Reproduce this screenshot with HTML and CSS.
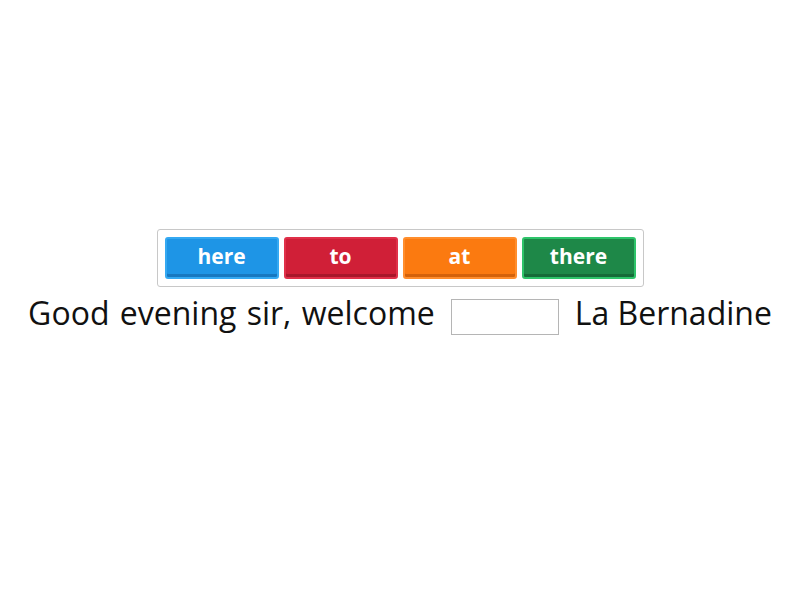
FILE: index.html
```html
<!DOCTYPE html>
<html>
<head>
<meta charset="utf-8">
<link rel="stylesheet" href="styles.css">
</head>
<body>
<div class="page">
  <div class="bank">
    <div class="tile tile-blue">here</div>
    <div class="tile tile-red">to</div>
    <div class="tile tile-orange">at</div>
    <div class="tile tile-green">there</div>
  </div>
  <div class="sentence">
    <span class="words lead">Good evening sir, welcome</span>
    <span class="blank"></span>
    <span class="words">La Bernadine</span>
  </div>
</div>
</body>
</html>
```

FILE: styles.css
```css
html, body {
  margin: 0;
  padding: 0;
  background: #fff;
  font-family: "Open Sans", sans-serif;
}
.page {
  width: 800px;
  height: 600px;
  display: flex;
  flex-direction: column;
  align-items: center;
  padding-top: 229px;
  box-sizing: border-box;
}
.bank {
  display: flex;
  gap: 5px;
  padding: 7px;
  border: 1px solid #c8c8c8;
  border-radius: 3px;
}
.tile {
  width: 114px;
  height: 42px;
  box-sizing: border-box;
  border-radius: 3px;
  display: flex;
  align-items: center;
  justify-content: center;
  color: #fff;
  font-weight: 700;
  font-size: 21px;
  padding-bottom: 4px;
}
.tile-blue {
  background: #1e95e6;
  border: 2px solid #35a9f2;
  box-shadow: inset 0 -3px 0 #1778c0;
}
.tile-red {
  background: #d01f37;
  border: 2px solid #e03049;
  box-shadow: inset 0 -3px 0 #a8172b;
}
.tile-orange {
  background: #fb7a10;
  border: 2px solid #ff8e2d;
  box-shadow: inset 0 -3px 0 #d4620a;
}
.tile-green {
  background: #1e8848;
  border: 2px solid #2ec46a;
  box-shadow: inset 0 -3px 0 #166b38;
}
.sentence {
  display: flex;
  align-items: center;
  gap: 16px;
  margin-top: 6px;
  font-size: 32px;
  color: #111;
  line-height: 40px;
}
.words {
  padding-bottom: 7px;
}
.lead {
  word-spacing: 2px;
}
.blank {
  width: 108px;
  height: 36px;
  box-sizing: border-box;
  border: 1px solid #b5b5b5;
  display: inline-block;
}
```
